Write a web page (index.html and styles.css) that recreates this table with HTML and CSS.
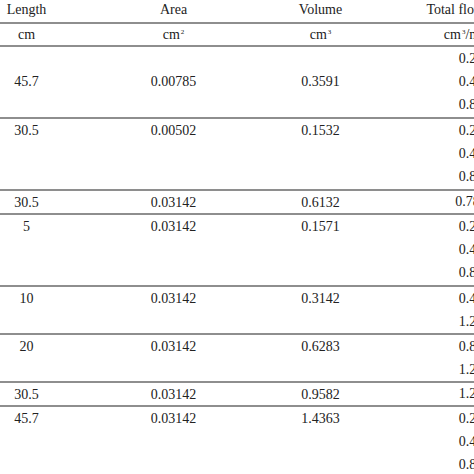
FILE: index.html
```html
<!DOCTYPE html>
<html>
<head>
<meta charset="utf-8">
<link rel="stylesheet" href="styles.css">
</head>
<body>
<div class="sheet">
  <div class="table">
    <div class="row head">
      <div class="cell">Length</div>
      <div class="cell">Area</div>
      <div class="cell">Volume</div>
      <div class="cell">Total flow rate</div>
    </div>
    <div class="row units">
      <div class="cell"><span>cm</span></div>
      <div class="cell"><span>cm<sup>2</sup></span></div>
      <div class="cell"><span>cm<sup>3</sup></span></div>
      <div class="cell"><span>cm<sup>3</sup>/min</span></div>
    </div>

    <div class="group n3">
      <div class="cell span mid">45.7</div>
      <div class="cell span mid">0.00785</div>
      <div class="cell span mid">0.3591</div>
      <div class="cell flow">0.25</div>
      <div class="cell flow">0.45</div>
      <div class="cell flow">0.85</div>
    </div>

    <div class="group n3">
      <div class="cell span">30.5</div>
      <div class="cell span">0.00502</div>
      <div class="cell span">0.1532</div>
      <div class="cell flow">0.25</div>
      <div class="cell flow">0.45</div>
      <div class="cell flow">0.85</div>
    </div>

    <div class="group n1">
      <div class="cell span">30.5</div>
      <div class="cell span">0.03142</div>
      <div class="cell span">0.6132</div>
      <div class="cell flow">0.785</div>
    </div>

    <div class="group n3">
      <div class="cell span">5</div>
      <div class="cell span">0.03142</div>
      <div class="cell span">0.1571</div>
      <div class="cell flow">0.25</div>
      <div class="cell flow">0.45</div>
      <div class="cell flow">0.85</div>
    </div>

    <div class="group n2">
      <div class="cell span">10</div>
      <div class="cell span">0.03142</div>
      <div class="cell span">0.3142</div>
      <div class="cell flow">0.45</div>
      <div class="cell flow">1.25</div>
    </div>

    <div class="group n2">
      <div class="cell span">20</div>
      <div class="cell span">0.03142</div>
      <div class="cell span">0.6283</div>
      <div class="cell flow">0.85</div>
      <div class="cell flow">1.25</div>
    </div>

    <div class="group n1">
      <div class="cell span">30.5</div>
      <div class="cell span">0.03142</div>
      <div class="cell span">0.9582</div>
      <div class="cell flow">1.25</div>
    </div>

    <div class="group n3">
      <div class="cell span">45.7</div>
      <div class="cell span">0.03142</div>
      <div class="cell span">1.4363</div>
      <div class="cell flow">0.25</div>
      <div class="cell flow">0.45</div>
      <div class="cell flow">0.85</div>
    </div>
  </div>
</div>
</body>
</html>
```

FILE: styles.css
```css
html, body {
  margin: 0;
  padding: 0;
  background: #ffffff;
}

body {
  width: 474px;
  height: 474px;
  overflow: hidden;
  font-family: "Liberation Serif", "Times New Roman", serif;
  font-size: 14px;
  color: #222222;
}

.sheet {
  width: 474px;
  overflow: hidden;
}

.table {
  width: 588px;
  margin-left: -47px;
}

.row,
.group {
  display: grid;
  grid-template-columns: repeat(4, 147px);
  border-bottom: 2px solid #8e8e8e;
}

.row .cell {
  display: flex;
  align-items: center;
  justify-content: center;
  line-height: 1;
}

.head {
  height: 22px;
}

.head .cell {
  padding-bottom: 2px;
}

.units {
  height: 21px;
}

.units .cell {
  padding-top: 1px;
}

.units .cell span {
  display: inline-block;
  line-height: 14px;
  white-space: nowrap;
}

sup {
  font-size: 7px;
  line-height: 0;
  position: relative;
  top: -5px;
  vertical-align: baseline;
  margin-left: 1px;
}

.group.n1 {
  height: 22px;
  grid-template-rows: 1fr;
}

.group.n2 {
  height: 46px;
  grid-template-rows: repeat(2, 1fr);
}

.group.n3 {
  height: 70px;
  grid-template-rows: repeat(3, 1fr);
}

.group .cell {
  display: flex;
  justify-content: center;
  align-items: center;
  line-height: 1;
}

.group .span {
  grid-row: 1 / -1;
  align-items: flex-start;
  padding-top: 5px;
}

.group .span.mid {
  align-items: center;
  padding-top: 0;
}

.group .flow {
  grid-column: 4;
  padding-left: 7px;
}
```
